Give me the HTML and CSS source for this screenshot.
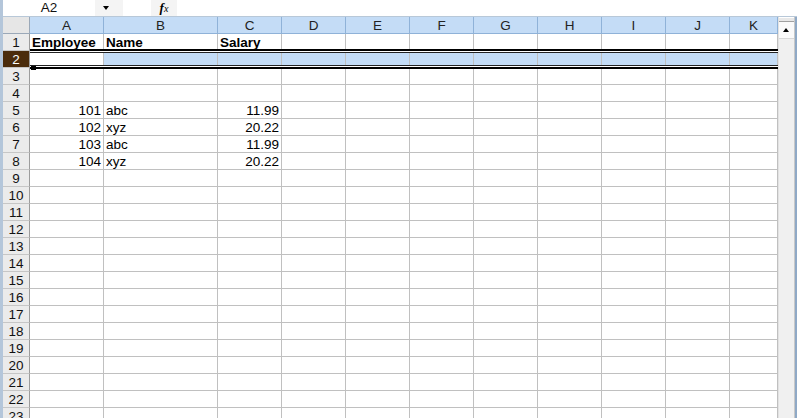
FILE: index.html
```html
<!DOCTYPE html>
<html>
<head>
<meta charset="utf-8">
<link rel="stylesheet" href="styles.css">
</head>
<body>
<div class="app">
  <div class="edge-left"></div>
  <div class="main">
    <div class="fbar">
      <div class="namebox">A2</div>
      <div class="dd"><span class="arrow"></span></div>
      <div class="gap"></div>
      <div class="fx"><i>f</i><span class="x">x</span></div>
      <div class="formula"></div>
    </div>
    <div class="body">
      <div class="sheet">
        <div class="grid">
          <div class="corner"></div>
          <div class="ch">A</div><div class="ch">B</div><div class="ch">C</div><div class="ch">D</div><div class="ch">E</div><div class="ch">F</div><div class="ch">G</div><div class="ch">H</div><div class="ch">I</div><div class="ch">J</div><div class="ch">K</div>

          <div class="rh">1</div><div class="c b">Employee</div><div class="c b">Name</div><div class="c b">Salary</div><div class="c"></div><div class="c"></div><div class="c"></div><div class="c"></div><div class="c"></div><div class="c"></div><div class="c"></div><div class="c"></div>

          <div class="rh sel">2</div><div class="c active"></div><div class="c hl"></div><div class="c hl"></div><div class="c hl"></div><div class="c hl"></div><div class="c hl"></div><div class="c hl"></div><div class="c hl"></div><div class="c hl"></div><div class="c hl"></div><div class="c hl"></div>

          <div class="rh">3</div><div class="c"></div><div class="c"></div><div class="c"></div><div class="c"></div><div class="c"></div><div class="c"></div><div class="c"></div><div class="c"></div><div class="c"></div><div class="c"></div><div class="c"></div>
          <div class="rh">4</div><div class="c"></div><div class="c"></div><div class="c"></div><div class="c"></div><div class="c"></div><div class="c"></div><div class="c"></div><div class="c"></div><div class="c"></div><div class="c"></div><div class="c"></div>

          <div class="rh">5</div><div class="c n">101</div><div class="c">abc</div><div class="c n">11.99</div><div class="c"></div><div class="c"></div><div class="c"></div><div class="c"></div><div class="c"></div><div class="c"></div><div class="c"></div><div class="c"></div>
          <div class="rh">6</div><div class="c n">102</div><div class="c">xyz</div><div class="c n">20.22</div><div class="c"></div><div class="c"></div><div class="c"></div><div class="c"></div><div class="c"></div><div class="c"></div><div class="c"></div><div class="c"></div>
          <div class="rh">7</div><div class="c n">103</div><div class="c">abc</div><div class="c n">11.99</div><div class="c"></div><div class="c"></div><div class="c"></div><div class="c"></div><div class="c"></div><div class="c"></div><div class="c"></div><div class="c"></div>
          <div class="rh">8</div><div class="c n">104</div><div class="c">xyz</div><div class="c n">20.22</div><div class="c"></div><div class="c"></div><div class="c"></div><div class="c"></div><div class="c"></div><div class="c"></div><div class="c"></div><div class="c"></div>

          <div class="rh">9</div><div class="c"></div><div class="c"></div><div class="c"></div><div class="c"></div><div class="c"></div><div class="c"></div><div class="c"></div><div class="c"></div><div class="c"></div><div class="c"></div><div class="c"></div>
          <div class="rh">10</div><div class="c"></div><div class="c"></div><div class="c"></div><div class="c"></div><div class="c"></div><div class="c"></div><div class="c"></div><div class="c"></div><div class="c"></div><div class="c"></div><div class="c"></div>
          <div class="rh">11</div><div class="c"></div><div class="c"></div><div class="c"></div><div class="c"></div><div class="c"></div><div class="c"></div><div class="c"></div><div class="c"></div><div class="c"></div><div class="c"></div><div class="c"></div>
          <div class="rh">12</div><div class="c"></div><div class="c"></div><div class="c"></div><div class="c"></div><div class="c"></div><div class="c"></div><div class="c"></div><div class="c"></div><div class="c"></div><div class="c"></div><div class="c"></div>
          <div class="rh">13</div><div class="c"></div><div class="c"></div><div class="c"></div><div class="c"></div><div class="c"></div><div class="c"></div><div class="c"></div><div class="c"></div><div class="c"></div><div class="c"></div><div class="c"></div>
          <div class="rh">14</div><div class="c"></div><div class="c"></div><div class="c"></div><div class="c"></div><div class="c"></div><div class="c"></div><div class="c"></div><div class="c"></div><div class="c"></div><div class="c"></div><div class="c"></div>
          <div class="rh">15</div><div class="c"></div><div class="c"></div><div class="c"></div><div class="c"></div><div class="c"></div><div class="c"></div><div class="c"></div><div class="c"></div><div class="c"></div><div class="c"></div><div class="c"></div>
          <div class="rh">16</div><div class="c"></div><div class="c"></div><div class="c"></div><div class="c"></div><div class="c"></div><div class="c"></div><div class="c"></div><div class="c"></div><div class="c"></div><div class="c"></div><div class="c"></div>
          <div class="rh">17</div><div class="c"></div><div class="c"></div><div class="c"></div><div class="c"></div><div class="c"></div><div class="c"></div><div class="c"></div><div class="c"></div><div class="c"></div><div class="c"></div><div class="c"></div>
          <div class="rh">18</div><div class="c"></div><div class="c"></div><div class="c"></div><div class="c"></div><div class="c"></div><div class="c"></div><div class="c"></div><div class="c"></div><div class="c"></div><div class="c"></div><div class="c"></div>
          <div class="rh">19</div><div class="c"></div><div class="c"></div><div class="c"></div><div class="c"></div><div class="c"></div><div class="c"></div><div class="c"></div><div class="c"></div><div class="c"></div><div class="c"></div><div class="c"></div>
          <div class="rh">20</div><div class="c"></div><div class="c"></div><div class="c"></div><div class="c"></div><div class="c"></div><div class="c"></div><div class="c"></div><div class="c"></div><div class="c"></div><div class="c"></div><div class="c"></div>
          <div class="rh">21</div><div class="c"></div><div class="c"></div><div class="c"></div><div class="c"></div><div class="c"></div><div class="c"></div><div class="c"></div><div class="c"></div><div class="c"></div><div class="c"></div><div class="c"></div>
          <div class="rh">22</div><div class="c"></div><div class="c"></div><div class="c"></div><div class="c"></div><div class="c"></div><div class="c"></div><div class="c"></div><div class="c"></div><div class="c"></div><div class="c"></div><div class="c"></div>
          <div class="rh">23</div><div class="c"></div><div class="c"></div><div class="c"></div><div class="c"></div><div class="c"></div><div class="c"></div><div class="c"></div><div class="c"></div><div class="c"></div><div class="c"></div><div class="c"></div>
        </div>
        <div class="selbox"></div>
        <div class="handle"></div>
      </div>
      <div class="vscroll">
        <div class="split"></div>
        <div class="upbtn"><span class="uparrow"></span></div>
        <div class="track"></div>
      </div>
      <div class="edge-right"></div>
    </div>
  </div>
</div>
</body>
</html>
```

FILE: styles.css
```css
html, body {
  margin: 0;
  padding: 0;
}
body {
  width: 797px;
  height: 418px;
  overflow: hidden;
  background: #fff;
  font-family: "Liberation Sans", Arial, sans-serif;
  font-size: 13.5px;
  color: #000;
}
.app {
  display: flex;
  width: 797px;
  height: 418px;
}
.edge-left {
  width: 3px;
  flex: none;
  background: #b4c6da;
}
.main {
  flex: 1;
  display: flex;
  flex-direction: column;
  min-width: 0;
}
.fbar {
  height: 17px;
  flex: none;
  display: flex;
  background: #fff;
  box-sizing: border-box;
  border-bottom: 1px solid #b8c8d8;
}
.namebox {
  width: 92px;
  text-align: center;
  line-height: 16px;
  font-size: 13.5px;
  color: #111;
}
.dd {
  width: 28px;
  background: #f4f4f4;
  position: relative;
}
.arrow {
  position: absolute;
  left: 8px;
  top: 6px;
  width: 0;
  height: 0;
  border-left: 3px solid transparent;
  border-right: 3px solid transparent;
  border-top: 4px solid #000;
}
.gap {
  width: 28px;
}
.fx {
  width: 26px;
  background: #f4f4f4;
  text-align: center;
  line-height: 16px;
  font-family: "Liberation Serif", serif;
  font-size: 13px;
}
.fx i {
  font-style: italic;
  font-weight: bold;
}
.fx .x {
  font-style: italic;
  font-size: 10px;
}
.formula {
  flex: 1;
}
.body {
  flex: 1;
  display: flex;
  min-height: 0;
}
.sheet {
  position: relative;
  width: 775px;
  flex: none;
  overflow: hidden;
}
.grid {
  display: grid;
  grid-template-columns: 27px 74px 114px 64px 64px 64px 64px 64px 64px 64px 64px 48px;
  grid-auto-rows: 17px;
}
.grid > div {
  box-sizing: border-box;
  border-right: 1px solid #c0c0c0;
  border-bottom: 1px solid #c0c0c0;
  line-height: 18px;
  white-space: nowrap;
  overflow: hidden;
}
.grid > .corner {
  background: #e6e6e6;
  border-right: 1px solid #9aa8b8;
  border-bottom: 1px solid #9aa8b8;
}
.grid > .ch {
  background: #c4dcf6;
  text-align: center;
  color: #222;
  line-height: 17px;
  border-right: 1px solid #8fb2d8;
  border-bottom: 1px solid #8fb2d8;
}
.grid > .rh {
  background: #ebebeb;
  text-align: center;
  color: #111;
  border-right: 1px solid #9c9c9c;
  border-bottom: 1px solid #c6c6c6;
}
.grid > .rh.sel {
  background: #4b2c0c;
  color: #fff;
}
.grid > .c {
  padding: 0 2px;
}
.grid > .c.b {
  font-weight: bold;
}
.grid > .c.n {
  text-align: right;
}
.grid > .c.hl {
  background: #c4dcf6;
}
.grid > .c.active {
  background: #fff;
}
.selbox {
  position: absolute;
  left: 27px;
  top: 32px;
  width: 748px;
  height: 20px;
  box-sizing: border-box;
  border-top: 2px solid #000;
  border-bottom: 2px solid #000;
  box-shadow: inset 0 1px 0 #fff, inset 0 2px 0 #222, inset 0 -1px 0 #fff, inset 0 -2px 0 #222;
}
.handle {
  position: absolute;
  left: 28px;
  top: 49px;
  width: 5px;
  height: 4px;
  background: #000;
}
.vscroll {
  width: 17px;
  flex: none;
  display: flex;
  flex-direction: column;
  background: #f0f0f0;
  box-sizing: border-box;
  border-left: 1px solid #e2e2e2;
  border-right: 1px solid #c8c8c8;
}
.split {
  height: 5px;
  border-top: 1px solid #fff;
  border-bottom: 1px solid #a0a0a0;
  background: #e8e8e8;
  box-sizing: border-box;
}
.upbtn {
  height: 17px;
  position: relative;
  background: #fafafa;
  border-bottom: 1px solid #d8d8d8;
  box-sizing: border-box;
}
.uparrow {
  position: absolute;
  left: 4px;
  top: 6px;
  width: 0;
  height: 0;
  border-left: 3px solid transparent;
  border-right: 3px solid transparent;
  border-bottom: 4px solid #000;
}
.track {
  flex: 1;
  background: #f0f0f0;
}
.edge-right {
  width: 2px;
  flex: none;
  background: #8fa9c6;
}
```
